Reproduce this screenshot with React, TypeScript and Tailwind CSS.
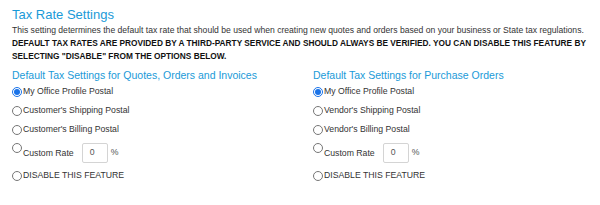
import React from "react";

function Radio({ checked, label, custom }: { checked?: boolean; label: string; custom?: boolean }) {
  if (custom) {
    return (
      <div className="flex items-center h-[27px]">
        <input
          type="radio"
          defaultChecked={checked}
          className="m-0 w-[10px] h-[10px] self-start mt-[4px] accent-[#1a73e8]"
        />
        <span className="ml-[1px] mt-[3px] text-[8.7px] text-[#333]">{label}</span>
        <div className="ml-[8px] w-[26px] h-[20px] border border-[#d4d4d4] rounded-[2px] flex items-center pl-[7px] text-[8.7px] text-[#555]">
          0
        </div>
        <span className="ml-[3px] text-[8.7px] text-[#555]">%</span>
      </div>
    );
  }
  return (
    <div className="flex items-center h-[19px]">
      <input
        type="radio"
        defaultChecked={checked}
        className="m-0 w-[10px] h-[10px] accent-[#1a73e8]"
      />
      <span className="ml-[1px] text-[8.7px] text-[#333]">{label}</span>
    </div>
  );
}

function Column({ heading, items }: { heading: string; items: string[] }) {
  return (
    <div className="flex flex-col">
      <div className="text-[10.5px] text-[#1a9ad8] leading-[14px]">{heading}</div>
      <div className="flex flex-col">
        <Radio checked label="My Office Profile Postal" />
        <Radio label={items[0]} />
        <Radio label={items[1]} />
        <Radio label="Custom Rate" custom />
        <Radio label="DISABLE THIS FEATURE" />
      </div>
    </div>
  );
}

export default function App() {
  return (
    <div
      className="w-[600px] h-[205px] bg-white pl-[12px] pr-[4px] pt-[6px] overflow-hidden"
      style={{ fontFamily: '"Liberation Sans", Arial, sans-serif' }}
    >
      <div className="text-[13px] leading-[18px] text-[#1a9ad8]">Tax Rate Settings</div>
      <div className="text-[8.6px] leading-[13px] text-[#333] whitespace-nowrap">
        This setting determines the default tax rate that should be used when creating new quotes and orders based on your business or State tax regulations.
      </div>
      <div className="text-[8.3px] leading-[13px] text-[#111] font-bold">
        DEFAULT TAX RATES ARE PROVIDED BY A THIRD-PARTY SERVICE AND SHOULD ALWAYS BE VERIFIED. YOU CAN DISABLE THIS FEATURE BY SELECTING "DISABLE" FROM THE OPTIONS BELOW.
      </div>
      <div className="grid grid-cols-[301px_1fr] mt-[5px]">
        <Column
          heading="Default Tax Settings for Quotes, Orders and Invoices"
          items={["Customer's Shipping Postal", "Customer's Billing Postal"]}
        />
        <Column
          heading="Default Tax Settings for Purchase Orders"
          items={["Vendor's Shipping Postal", "Vendor's Billing Postal"]}
        />
      </div>
    </div>
  );
}
